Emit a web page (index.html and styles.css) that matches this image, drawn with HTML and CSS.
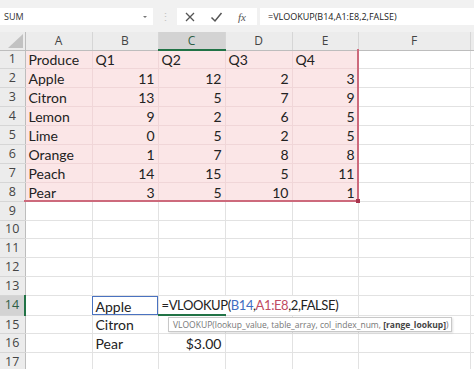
FILE: index.html
```html
<!DOCTYPE html>
<html lang="en">
<head>
    <meta charset="UTF-8">
    <title>VLOOKUP</title>
    <link rel="stylesheet" href="styles.css">
</head>
<body>
    <div class="toolbar">
        <div class="namebox">
            <span>SUM</span>
            <span class="caret"></span>
        </div>
        <div class="grip">⋮</div>
        <div class="fx-buttons">
            <svg width="12" height="12" viewBox="0 0 12 12"><path d="M2 2 L10 10 M10 2 L2 10" stroke="#555" stroke-width="1.3" fill="none"/></svg>
            <svg width="13" height="12" viewBox="0 0 13 12"><path d="M1.5 6.5 L5 10 L11.5 2" stroke="#555" stroke-width="1.5" fill="none"/></svg>
            <span class="fx">fx</span>
        </div>
        <div class="formula">=VLOOKUP(B14,A1:E8,2,FALSE)</div>
    </div>

    <div class="sheet">
        <table>
            <colgroup>
                <col class="c-head">
                <col class="c-a"><col class="c-b"><col class="c-c"><col class="c-d"><col class="c-e">
                <col class="c-f"><col class="c-g">
            </colgroup>
            <tr class="cols">
                <th class="corner"><span class="tri"></span></th>
                <th>A</th><th>B</th><th class="active">C</th><th>D</th><th>E</th><th>F</th><th></th>
            </tr>
            <tr class="ref"><th>1</th><td>Produce</td><td>Q1</td><td>Q2</td><td>Q3</td><td>Q4</td><td></td><td></td></tr>
            <tr class="ref"><th>2</th><td>Apple</td><td class="n">11</td><td class="n">12</td><td class="n">2</td><td class="n">3</td><td></td><td></td></tr>
            <tr class="ref"><th>3</th><td>Citron</td><td class="n">13</td><td class="n">5</td><td class="n">7</td><td class="n">9</td><td></td><td></td></tr>
            <tr class="ref"><th>4</th><td>Lemon</td><td class="n">9</td><td class="n">2</td><td class="n">6</td><td class="n">5</td><td></td><td></td></tr>
            <tr class="ref"><th>5</th><td>Lime</td><td class="n">0</td><td class="n">5</td><td class="n">2</td><td class="n">5</td><td></td><td></td></tr>
            <tr class="ref"><th>6</th><td>Orange</td><td class="n">1</td><td class="n">7</td><td class="n">8</td><td class="n">8</td><td></td><td></td></tr>
            <tr class="ref"><th>7</th><td>Peach</td><td class="n">14</td><td class="n">15</td><td class="n">5</td><td class="n">11</td><td></td><td></td></tr>
            <tr class="ref"><th>8</th><td>Pear</td><td class="n">3</td><td class="n">5</td><td class="n">10</td><td class="n">1</td><td></td><td></td></tr>
            <tr><th>9</th><td></td><td></td><td></td><td></td><td></td><td></td><td></td></tr>
            <tr><th>10</th><td></td><td></td><td></td><td></td><td></td><td></td><td></td></tr>
            <tr><th>11</th><td></td><td></td><td></td><td></td><td></td><td></td><td></td></tr>
            <tr><th>12</th><td></td><td></td><td></td><td></td><td></td><td></td><td></td></tr>
            <tr><th>13</th><td></td><td></td><td></td><td></td><td></td><td></td><td></td></tr>
            <tr class="current">
                <th>14</th><td></td>
                <td class="lookup">Apple</td>
                <td class="edit"><span class="edit-text">=VLOOKUP(<span class="r-blue">B14</span>,<span class="r-red">A1:E8</span>,2,FALSE)</span></td>
                <td class="under"></td><td></td><td></td><td></td>
            </tr>
            <tr><th>15</th><td></td><td>Citron</td><td></td><td></td><td></td><td></td><td></td></tr>
            <tr><th>16</th><td></td><td>Pear</td><td class="n">$3.00</td><td></td><td></td><td></td><td></td></tr>
            <tr><th>17</th><td></td><td></td><td></td><td></td><td></td><td></td><td></td></tr>
        </table>

        <div class="range-box"><span class="handle"></span></div>
        <div class="tooltip">VLOOKUP(lookup_value, table_array, col_index_num, <b>[range_lookup]</b>)</div>
    </div>
</body>
</html>
```

FILE: styles.css
```css
body {
    margin: 0;
    width: 474px;
    height: 369px;
    overflow: hidden;
    background: #fff;
    font-family: 'Lato', 'Liberation Sans', sans-serif;
    color: #222;
}

/* formula bar */
.toolbar {
    display: flex;
    align-items: flex-start;
    height: 32px;
    padding-top: 8px;
    box-sizing: border-box;
    background: #f1f1f1;
}

.namebox {
    width: 153px;
    height: 17px;
    background: #fff;
    display: flex;
    align-items: center;
    justify-content: space-between;
    padding: 0 6px 0 4px;
    box-sizing: border-box;
    font-family: 'Open Sans', sans-serif;
    font-size: 9px;
    color: #333;
}

.caret {
    width: 0;
    height: 0;
    border-left: 2px solid transparent;
    border-right: 2px solid transparent;
    border-top: 2px solid #777;
}

.grip {
    width: 24px;
    text-align: center;
    color: #c4c4c4;
    font-size: 11px;
    line-height: 17px;
}

.fx-buttons {
    width: 80px;
    height: 17px;
    background: #fff;
    display: flex;
    align-items: center;
    gap: 14px;
    padding-left: 7px;
    box-sizing: border-box;
}

.fx {
    font-family: 'Liberation Serif', serif;
    font-style: italic;
    font-size: 11px;
    color: #555;
    margin-left: 1px;
}

.formula {
    flex: 1;
    height: 17px;
    margin-left: 3px;
    background: #fff;
    padding-left: 8px;
    font-family: 'Open Sans', sans-serif;
    font-size: 9px;
    line-height: 17px;
    color: #222;
}

/* grid */
.sheet {
    position: relative;
}

table {
    border-collapse: collapse;
    table-layout: fixed;
    width: 474px;
}

.c-head { width: 25px; }
.c-a { width: 67px; }
.c-b { width: 66px; }
.c-c { width: 67px; }
.c-d { width: 67px; }
.c-e { width: 66px; }
.c-f { width: 112px; }
.c-g { width: 4px; }

tr {
    height: 18.9px;
}

tr.cols {
    height: 18px;
}

th {
    background: #ececec;
    font-family: 'Open Sans', sans-serif;
    font-weight: normal;
    font-size: 12px;
    color: #444;
    padding: 0;
    border: 1px solid #d6d6d6;
    line-height: 16px;
}

tr.cols th {
    border-top: none;
    border-bottom: 1px solid #bdbdbd;
}

tr th:first-child {
    border-left: none;
    border-right: 1px solid #bdbdbd;
    font-size: 12.5px;
}

.corner {
    position: relative;
}

.tri {
    position: absolute;
    right: 2px;
    bottom: 2px;
    width: 0;
    height: 0;
    border-left: 15px solid transparent;
    border-bottom: 14px solid #c2c2c2;
}

th.active,
.current th {
    background: #d3d3d3;
    color: #2e5e45;
}

tr.cols th.active {
    border-bottom: 2px solid #217346;
}

.current th:first-child {
    border-right: 2px solid #217346;
}

td {
    border: 1px solid #e2e2e2;
    padding: 0 3px;
    font-size: 14px;
    line-height: 17px;
    white-space: nowrap;
    overflow: hidden;
    vertical-align: bottom;
}

td.n {
    text-align: right;
}

.ref td:nth-child(-n+6) {
    background: #fbe6e7;
    border-color: #f0d6d8;
}

/* formula being typed into C14 */
td.lookup {
    outline: 1.5px solid #4a72c0;
    outline-offset: -1px;
}

td.edit {
    overflow: visible;
    border-right-color: transparent;
    border-bottom: 2px solid #217346;
}

td.under {
    border-right-color: transparent;
}

.edit-text {
    position: relative;
    z-index: 1;
    background: #fff;
    padding-right: 2px;
    font-size: 13px;
    letter-spacing: -0.4px;
}

.r-blue { color: #3f6ec2; }
.r-red { color: #bf4b62; }

.range-box {
    position: absolute;
    left: 24px;
    top: 17px;
    width: 335px;
    height: 153px;
    border-right: 2px solid #cd6a7c;
    border-bottom: 2px solid #cd6a7c;
    box-sizing: border-box;
    pointer-events: none;
}

.handle {
    position: absolute;
    right: -3px;
    bottom: -3px;
    width: 4px;
    height: 4px;
    background: #a8344d;
}

.tooltip {
    position: absolute;
    left: 168px;
    top: 285px;
    width: 284px;
    height: 15px;
    box-sizing: border-box;
    border: 1px solid #c8c8c8;
    background: #fff;
    box-shadow: 1px 1px 2px rgba(0, 0, 0, 0.12);
    padding-left: 4px;
    font-family: 'Open Sans', sans-serif;
    font-size: 8.5px;
    line-height: 13px;
    color: #777;
    white-space: nowrap;
    z-index: 2;
}

.tooltip b {
    color: #444;
}
```
